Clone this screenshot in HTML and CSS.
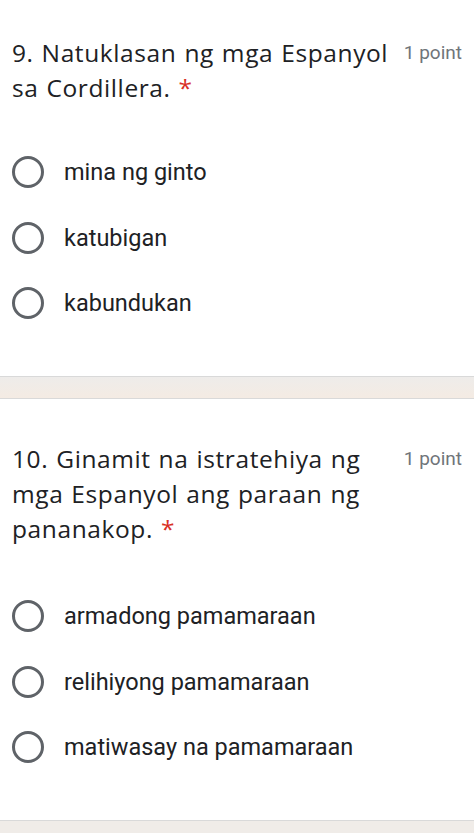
FILE: index.html
```html
<!DOCTYPE html>
<html lang="tl">
<head>
<meta charset="utf-8">
<title>Quiz</title>
<link rel="stylesheet" href="styles.css">
</head>
<body>
<section class="question q9">
  <div class="head">
    <div class="title">9. Natuklasan ng mga Espanyol sa Cordillera. <span class="req">*</span></div>
    <div class="points">1 point</div>
  </div>
  <div class="options">
    <div class="option"><span class="radio"></span><span class="label">mina ng ginto</span></div>
    <div class="option"><span class="radio"></span><span class="label">katubigan</span></div>
    <div class="option"><span class="radio"></span><span class="label">kabundukan</span></div>
  </div>
</section>
<div class="band"></div>
<section class="question q10">
  <div class="head">
    <div class="title">10. Ginamit na istratehiya ng mga Espanyol ang paraan ng pananakop. <span class="req">*</span></div>
    <div class="points">1 point</div>
  </div>
  <div class="options">
    <div class="option"><span class="radio"></span><span class="label">armadong pamamaraan</span></div>
    <div class="option"><span class="radio"></span><span class="label">relihiyong pamamaraan</span></div>
    <div class="option"><span class="radio"></span><span class="label">matiwasay na pamamaraan</span></div>
  </div>
</section>
<div class="band band-bottom"></div>
</body>
</html>
```
FILE: styles.css
```css
html, body {
  margin: 0;
  padding: 0;
  background: #ffffff;
}
body {
  width: 474px;
  height: 833px;
  overflow: hidden;
  color: #202124;
}
.question {
  padding: 0 12px 40px 12px;
}
.q9 { padding-top: 35px; }
.q10 { padding-top: 42px; }
.head {
  display: flex;
  align-items: flex-start;
  gap: 12px;
}
.title {
  flex: 1;
  font-family: "Open Sans", "Lato", sans-serif;
  font-size: 24.5px;
  letter-spacing: 0.6px;
  word-spacing: 1px;
  line-height: 35px;
  color: #202124;
}
.req {
  color: #d93025;
  letter-spacing: 0;
}
.points {
  font-family: "Roboto", sans-serif;
  font-size: 19px;
  line-height: 35px;
  color: #70757a;
  white-space: nowrap;
  flex: none;
}
.options {
  display: flex;
  flex-direction: column;
  margin-top: 34px;
}
.q10 .options { margin-top: 37px; }
.option {
  display: flex;
  align-items: center;
  height: 65.7px;
  gap: 20px;
}
.radio {
  width: 32px;
  height: 32px;
  box-sizing: border-box;
  border: 3.3px solid #5f6368;
  border-radius: 50%;
  flex: none;
}
.label {
  font-family: "Roboto", sans-serif;
  font-size: 23.5px;
  color: #202124;
}
.band {
  height: 21px;
  border-top: 1px solid #d9d9d9;
  border-bottom: 1px solid #d9d9d9;
  background: linear-gradient(#eeecea, #f4ebe3);
}
.band-bottom {
  height: 40px;
  border-bottom: none;
  background: #f0ece8;
}
```
